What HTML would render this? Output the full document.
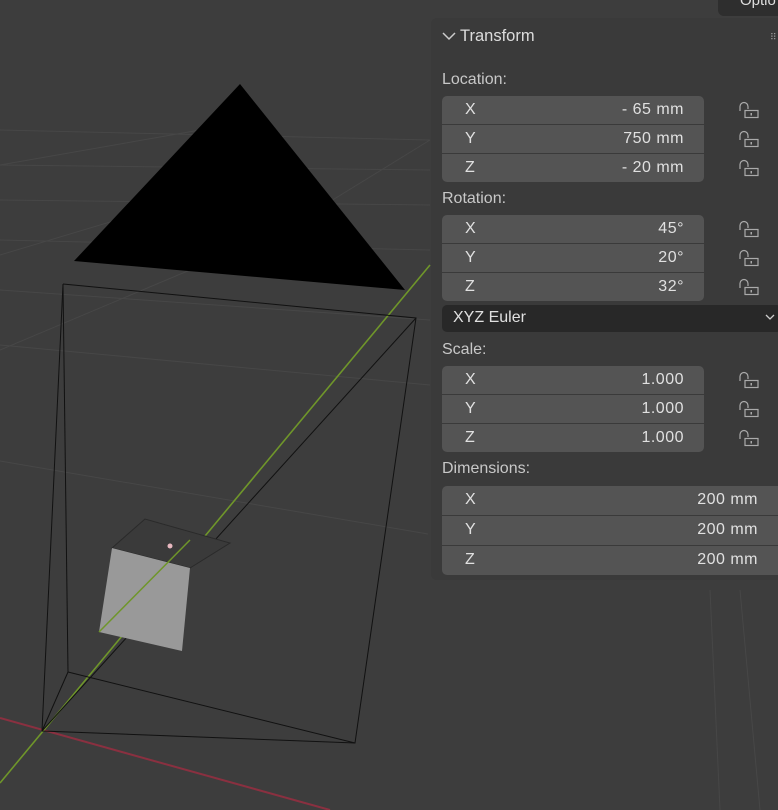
<!DOCTYPE html>
<html><head><style>
body{margin:0;width:778px;height:810px;background:#3d3d3d;overflow:hidden;position:relative;font-family:"Liberation Sans","DejaVu Sans",sans-serif;}
svg{position:absolute;left:0;top:0}
.panel{position:absolute;left:431px;top:18px;width:347px;height:562px;background:#3a3a3a;border-radius:6px 0 0 6px}
.t{position:absolute;color:#dcdcdc;font-size:16.5px}
.lbl{position:absolute;color:#c8c8c8;font-size:16px;left:442px}
.grp{position:absolute;left:442px;width:262px;background:#545454;border-radius:5px;overflow:hidden}
.row{height:28px;border-bottom:1px solid #3a3a3a;position:relative;color:#e0e0e0;font-size:16px}
.row:last-child{border-bottom:none}
.row .k{position:absolute;left:23px;top:5px}
.row .v{position:absolute;right:20px;top:5px;letter-spacing:.5px}
</style></head><body>
<svg width="778" height="810">
<g stroke="#474747" stroke-width="1" fill="none">
<line x1="0" y1="130" x2="430" y2="140"/>
<line x1="0" y1="165" x2="430" y2="170"/>
<line x1="0" y1="200" x2="430" y2="205"/>
<line x1="0" y1="240" x2="430" y2="250"/>
<line x1="0" y1="290" x2="430" y2="320"/>
<line x1="0" y1="345" x2="430" y2="385"/>
<line x1="0" y1="461" x2="428" y2="534"/>
<line x1="0" y1="255" x2="150" y2="210"/>
<line x1="0" y1="165" x2="200" y2="130"/>
<line x1="0" y1="350" x2="190" y2="270"/>
<line x1="300" y1="220" x2="430" y2="140"/>
<line x1="710" y1="590" x2="720" y2="810"/>
<line x1="740" y1="590" x2="760" y2="810"/>
</g>
<line x1="0" y1="718" x2="330" y2="810" stroke="#8a3040" stroke-width="2"/>
<line x1="0" y1="783" x2="430" y2="265" stroke="#6f962a" stroke-width="1.6"/>
<polygon points="240,84 74,261 405,290" fill="#000"/>
<g stroke="#111" stroke-width="1" fill="none">
<polyline points="63,284 416,318 355,743 42,731 63,284"/>
<line x1="42" y1="731" x2="68" y2="672"/>
<line x1="68" y1="672" x2="355" y2="743"/>
<line x1="68" y1="672" x2="63" y2="284"/>
<line x1="42" y1="731" x2="416" y2="318"/>
</g>
<polygon points="112,548 145,519 230,543 190,568" fill="#3a3a3a" stroke="#2a2a2a"/>
<polygon points="112,548 190,568 182,651 99,632" fill="#999"/>
<line x1="99" y1="632" x2="190" y2="540" stroke="#6f962a" stroke-width="1.5"/>
<circle cx="170" cy="546" r="2.5" fill="#e8b8c0"/>
</svg>
<div style="position:absolute;left:718px;top:0;width:60px;height:16px;background:#2e2e2e;border-radius:0 0 0 6px"></div>
<div style="position:absolute;left:740px;top:-8px;color:#ddd;font-size:15px">Optio</div>
<div class="panel"></div>
<svg width="778" height="810" style="pointer-events:none"><path d="M443 33 L449 39 L455 33" stroke="#ccc" stroke-width="1.5" fill="none"/><path d="M766 314 L770 318 L774 314" stroke="#ccc" stroke-width="1.3" fill="none"/></svg>
<div class="t" style="left:460px;top:27px">Transform</div>
<div style="position:absolute;left:770px;top:32px;color:#999;font-size:9px">⠿</div>
<div class="lbl" style="top:71px">Location:</div>
<div class="grp" style="top:96px"><div class="row"><span class="k">X</span><span class="v">- 65 mm</span></div><div class="row"><span class="k">Y</span><span class="v">750 mm</span></div><div class="row"><span class="k">Z</span><span class="v">- 20 mm</span></div></div>
<div class="lbl" style="top:190px">Rotation:</div>
<div class="grp" style="top:215px"><div class="row"><span class="k">X</span><span class="v">45°</span></div><div class="row"><span class="k">Y</span><span class="v">20°</span></div><div class="row"><span class="k">Z</span><span class="v">32°</span></div></div>
<div style="position:absolute;left:442px;top:305px;width:340px;height:27px;background:#282828;border-radius:5px;color:#e0e0e0;font-size:16px"><span style="position:absolute;left:11px;top:4px">XYZ Euler</span></div>
<svg width="778" height="810" style="pointer-events:none"><path d="M766 315 L770 319 L774 315" stroke="#ccc" stroke-width="1.3" fill="none"/></svg>
<div class="lbl" style="top:341px">Scale:</div>
<div class="grp" style="top:366px"><div class="row"><span class="k">X</span><span class="v">1.000</span></div><div class="row"><span class="k">Y</span><span class="v">1.000</span></div><div class="row"><span class="k">Z</span><span class="v">1.000</span></div></div>
<div class="lbl" style="top:460px">Dimensions:</div>
<div class="grp" style="top:486px;width:340px;border-radius:5px 0 0 5px"><div class="row" style="height:29px"><span class="k">X</span><span class="v" style="right:24px">200 mm</span></div><div class="row" style="height:29px"><span class="k">Y</span><span class="v" style="right:24px">200 mm</span></div><div class="row" style="height:29px"><span class="k">Z</span><span class="v" style="right:24px">200 mm</span></div></div>
<svg width="778" height="810" style="pointer-events:none">
<defs><g id="lk" stroke="#aaa" stroke-width="1.2" fill="none"><path d="M1 10 V5.5 a4 4 0 0 1 8 0 V8"/><rect x="6" y="9.5" width="13" height="7"/><rect x="11.5" y="12" width="1.5" height="2.5" fill="#aaa" stroke="none"/></g></defs>
<use href="#lk" x="739" y="101"/><use href="#lk" x="739" y="130"/><use href="#lk" x="739" y="159"/>
<use href="#lk" x="739" y="220"/><use href="#lk" x="739" y="249"/><use href="#lk" x="739" y="278"/>
<use href="#lk" x="739" y="371"/><use href="#lk" x="739" y="400"/><use href="#lk" x="739" y="429"/>
</svg>
</body></html>
